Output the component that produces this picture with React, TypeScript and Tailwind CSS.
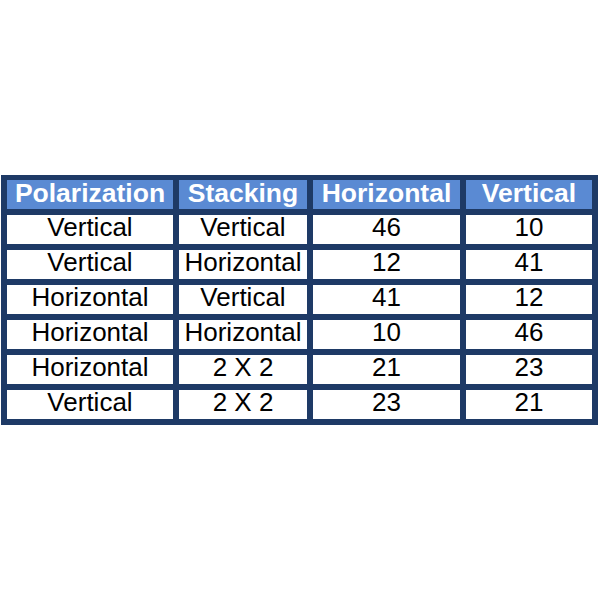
import React from "react";

const rows = [
  ["Vertical", "Vertical", "46", "10"],
  ["Vertical", "Horizontal", "12", "41"],
  ["Horizontal", "Vertical", "41", "12"],
  ["Horizontal", "Horizontal", "10", "46"],
  ["Horizontal", "2 X 2", "21", "23"],
  ["Vertical", "2 X 2", "23", "21"],
];

const headers = ["Polarization", "Stacking", "Horizontal", "Vertical"];

export default function App() {
  return (
    <div className="w-[600px] h-[600px] bg-white" style={{ fontFamily: '"Liberation Sans", Arial, sans-serif' }}>
      <div className="pt-[175px] pl-[1px]">
        <div className="inline-grid grid-cols-[166px_128px_147px_126px] gap-x-[6px] gap-y-[6px] bg-[#1e3a66] pt-[5px] pb-[6px] px-[6px]">
          {headers.map((h) => (
            <div
              key={h}
              className="h-[29px] pb-[3px] bg-[#5a8ad3] text-white font-bold text-[26.5px] leading-none flex items-center justify-center whitespace-nowrap"
            >
              {h}
            </div>
          ))}
          {rows.map((r, i) =>
            r.map((c, j) => (
              <div
                key={`${i}-${j}`}
                className="h-[29px] pb-[6px] bg-white text-black text-[26px] leading-none flex items-center justify-center whitespace-nowrap"
              >
                {c}
              </div>
            ))
          )}
        </div>
      </div>
    </div>
  );
}
